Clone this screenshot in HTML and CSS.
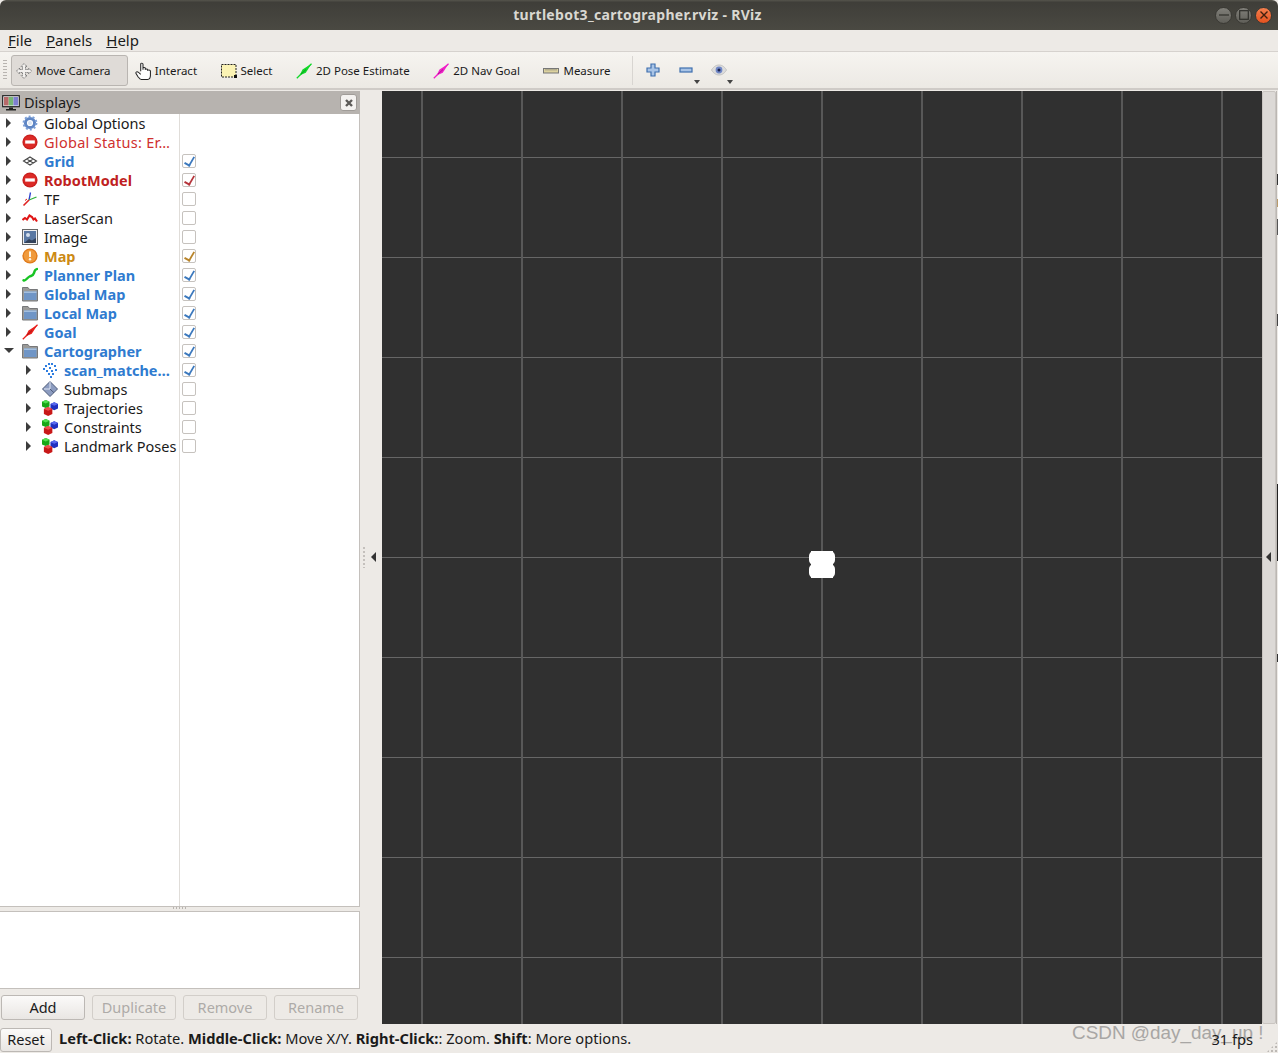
FILE: index.html
```html
<!DOCTYPE html>
<html lang="en">
<head>
    <meta charset="UTF-8">
    <title>turtlebot3_cartographer.rviz - RViz</title>
    <link rel="stylesheet" href="styles.css">
</head>
<body>

    <!-- shared icons -->
    <svg class="icon-defs" width="0" height="0">
        <symbol id="i-error" viewBox="0 0 16 16">
            <circle cx="8" cy="8" r="7.6" fill="#c9201f"/>
            <circle cx="8" cy="8" r="6.2" fill="#dc2a26"/>
            <rect x="3.2" y="6.4" width="9.6" height="3.2" fill="#fff"/>
        </symbol>
        <symbol id="i-warn" viewBox="0 0 16 16">
            <circle cx="8" cy="8" r="7.6" fill="#e07b1c"/>
            <circle cx="8" cy="8" r="6.2" fill="#f09a3c"/>
            <rect x="7" y="3.4" width="2" height="5.6" fill="#fff3e0"/>
            <circle cx="8" cy="11.3" r="1.2" fill="#fff3e0"/>
        </symbol>
        <symbol id="i-gear" viewBox="0 0 16 16">
            <circle cx="8" cy="8" r="4.6" fill="none" stroke="#5f86c4" stroke-width="3"/>
            <circle cx="8" cy="8" r="6.4" fill="none" stroke="#7c9fd6" stroke-width="2" stroke-dasharray="2 2"/>
            <circle cx="8" cy="8" r="2" fill="#dbe6f5"/>
        </symbol>
        <symbol id="i-grid" viewBox="0 0 16 16">
            <path d="M8 4 14.5 8 8 12 1.5 8Z M4.7 6 11.2 10 M11.3 6 4.8 10" fill="none" stroke="#444" stroke-width="1.1"/>
        </symbol>
        <symbol id="i-tf" viewBox="0 0 16 16">
            <path d="M7 9 8.5 1.5" stroke="#2b3fd0" stroke-width="1.3" fill="none"/>
            <path d="M7 9 14.5 6" stroke="#2fb13a" stroke-width="1.3" fill="none"/>
            <path d="M7 9 1.5 14.5" stroke="#e02020" stroke-width="1.6" fill="none"/>
            <path d="M3 9.5 5 8" stroke="#e02020" stroke-width="1" fill="none"/>
        </symbol>
        <symbol id="i-laser" viewBox="0 0 16 16">
            <path d="M.5 10 3 8 5 9.5 7.5 5.5 10 7 11.5 9.5 13 8.5 15 11.5" fill="none" stroke="#e01515" stroke-width="2.1"/>
        </symbol>
        <symbol id="i-image" viewBox="0 0 16 16">
            <rect x=".5" y=".5" width="15" height="15" fill="#eee" stroke="#666"/>
            <rect x="2" y="2" width="12" height="12" fill="#5a78a3"/>
            <circle cx="6" cy="6" r="2" fill="#d3deec"/>
            <path d="M2 14 7 10 10 11.5 14 9V14Z" fill="#34425a"/>
        </symbol>
        <symbol id="i-path" viewBox="0 0 16 16">
            <path d="M1.5 13.2C3.500 14.800 5 10.500 7.500 9.500S11 9 12 6 13 3 15 2" fill="none" stroke="#18c424" stroke-width="2.400" stroke-linecap="round"/>
        </symbol>
        <symbol id="i-folder" viewBox="0 0 16 16">
            <path d="M.5 15V1.500H6L7.500 3.500H15.500V15Z" fill="#9a9a98" stroke="#77787a"/>
            <rect x="2" y="5.500" width="12.500" height="8.500" fill="#6f95c6"/>
            <rect x="2" y="5.500" width="12.500" height="1.500" fill="#a4bfdf"/>
        </symbol>
        <symbol id="i-arrow" viewBox="0 0 16 16">
            <path d="M.8 15.200 15.500 .8" stroke="currentColor" stroke-width="1.300" fill="none"/>
            <path d="M3.500 12.500 6.500 6.500 15.500 .8 9.800 9.800Z" fill="currentColor"/>
            <path d="M5 11 10 6.500" stroke="#0005" stroke-width=".8" fill="none"/>
        </symbol>
        <symbol id="i-scan" viewBox="0 0 16 16">
            <g fill="#2f7ee0">
                <rect x="6" y="1" width="2" height="2"/><rect x="9" y="1" width="2" height="2"/><rect x="3" y="3" width="2" height="2"/>
                <rect x="12" y="3" width="2" height="2"/><rect x="1" y="6" width="2" height="2"/><rect x="7" y="5" width="2" height="2"/>
                <rect x="13" y="7" width="2" height="2"/><rect x="4" y="8" width="2" height="2"/><rect x="9" y="8" width="2" height="2"/>
                <rect x="6" y="11" width="2" height="2"/><rect x="10" y="11" width="2" height="2"/><rect x="8" y="14" width="2" height="2"/>
            </g>
        </symbol>
        <symbol id="i-submap" viewBox="0 0 16 16">
            <path d="M8 .5 15.500 8 8 15.500 .5 8Z" fill="#8c9cc0" stroke="#4d5a78"/>
            <path d="M8 .5V8L2 8" stroke="#dfe5f2" fill="none"/>
            <path d="M8 8 12 11.800" stroke="#4d5a78" fill="none"/>
        </symbol>
        <symbol id="i-cubes" viewBox="0 0 17 17">
            <path d="M4 0 8 1.800V6.800L4 8.600 0 6.800V1.800Z" fill="#18a818"/>
            <path d="M4 0 8 1.800 4 3.600 0 1.800Z" fill="#52e052"/>
            <path d="M13 2.500 17 4.300V9L13 10.800 9 9V4.300Z" fill="#2030c0"/>
            <path d="M13 2.500 17 4.300 13 6.100 9 4.300Z" fill="#5868ee"/>
            <path d="M6.500 7.500 11 9.500V15L6.500 17 2 15V9.500Z" fill="#c81818"/>
            <path d="M6.500 7.500 11 9.500 6.500 11.500 2 9.500Z" fill="#f05050"/>
        </symbol>
    </svg>

    <header class="titlebar">
        <div class="title">turtlebot3_cartographer.rviz - RViz</div>
        <div class="win-buttons">
            <span class="win-btn"><svg width="10" height="10" viewBox="0 0 10 10"><path d="M0 5H10" stroke="#2f2f2b" stroke-width="1.200"/></svg></span>
            <span class="win-btn"><svg width="10" height="10" viewBox="0 0 10 10"><rect x=".7" y=".7" width="8.600" height="8.600" fill="none" stroke="#2f2f2b" stroke-width="1.200"/></svg></span>
            <span class="win-btn close"><svg width="10" height="10" viewBox="0 0 10 10"><path d="M1.500 1.500 8.500 8.500M8.500 1.500 1.500 8.500" stroke="#40200f" stroke-width="1.400"/></svg></span>
        </div>
    </header>

    <nav class="menubar">
        <a><u>F</u>ile</a>
        <a><u>P</u>anels</a>
        <a><u>H</u>elp</a>
    </nav>

    <div class="toolbar">
        <div class="grip"></div>
        <div class="tool active">
            <svg width="16" height="16" viewBox="0 0 16 16"><path d="M8 .5 11 3.500H9.500V6.500H12.500V5L15.500 8 12.500 11V9.500H9.500V12.500H11L8 15.500 5 12.500H6.500V9.500H3.500V11L.5 8 3.500 5V6.500H6.500V3.500H5Z" fill="#f2f0ee" stroke="#666" stroke-width=".8" stroke-dasharray="1.500 .6"/></svg>
            Move Camera
        </div>
        <div class="tool">
            <svg width="16" height="18" viewBox="0 0 14 17.500" preserveAspectRatio="none"><path d="M5 9V2.200C5 .7 7 .7 7 2.200V7.500V6C7 5 9 5 9 6V7.500C9 6.500 11 6.500 11 7.500V8.500C11 7.500 13.500 7.500 13.500 8.800V13C13.500 15.500 12.500 17 11 17H5.500C4 17 3.500 15.500 2.500 14L.8 11C.5 9.800 1.800 9 3 10L5 12" fill="#fff" stroke="#222" stroke-width=".9"/></svg>
            Interact
        </div>
        <div class="tool">
            <svg width="16" height="16" viewBox="0 0 16 16"><rect x=".5" y="1.500" width="14.500" height="12.500" fill="#fbf3b4" stroke="#222" stroke-dasharray="2 1"/><rect x="13" y="12" width="3" height="3" fill="#111"/></svg>
            Select
        </div>
        <div class="tool">
            <svg class="green" width="16" height="16"><use href="#i-arrow"/></svg>
            2D Pose Estimate
        </div>
        <div class="tool">
            <svg class="pink" width="16" height="16"><use href="#i-arrow"/></svg>
            2D Nav Goal
        </div>
        <div class="tool">
            <svg width="16" height="16" viewBox="0 0 16 16"><rect x=".5" y="5.500" width="15" height="4.500" fill="#dcd29f" stroke="#777"/><path d="M3 5.500V7.500M5 5.500V7.500M7 5.500V7.500M9 5.500V7.500M11 5.500V7.500M13 5.500V7.500" stroke="#777" stroke-width=".8"/></svg>
            Measure
        </div>
        <div class="tool-sep"></div>
        <div class="mini-tool">
            <svg width="14" height="14" viewBox="0 0 14 14"><path d="M5 1H9V5H13V9H9V13H5V9H1V5H5Z" fill="#a9c4e6" stroke="#3e6fae" stroke-width="1.200"/></svg>
        </div>
        <div class="mini-tool has-menu">
            <svg width="14" height="14" viewBox="0 0 14 14"><rect x="1" y="5" width="12" height="4" fill="#a9c4e6" stroke="#3e6fae" stroke-width="1.200"/></svg>
        </div>
        <div class="mini-tool has-menu">
            <svg width="16" height="12" viewBox="0 0 16 12"><path d="M.5 6C3 2 5.500 1 8 1S13 2 15.500 6C13 10 10.500 11 8 11S3 10 .5 6Z" fill="#dcdcdc" stroke="#bbb" stroke-width=".8"/><circle cx="8" cy="6" r="3.400" fill="#6f86c6"/><circle cx="8" cy="6" r="1.500" fill="#1c2550"/></svg>
        </div>
    </div>

    <div class="workspace">
        <aside class="sidebar">
            <div class="panel-title">
                <svg width="18" height="16" viewBox="0 0 18 16"><rect x=".7" y=".7" width="16.600" height="11" fill="#fff" stroke="#222" stroke-width="1.200"/><rect x="2" y="2" width="4.700" height="8.500" fill="#b86a6a"/><rect x="6.700" y="2" width="4.700" height="8.500" fill="#76b676"/><rect x="11.400" y="2" width="4.700" height="8.500" fill="#7f7fd0"/><path d="M7 12.500H11V14H14V15.500H4V14H7Z" fill="#222"/></svg>
                <span class="panel-name">Displays</span>
                <span class="panel-close">
                    <svg width="10" height="10" viewBox="0 0 10 10"><path d="M2 2 8 8M8 2 2 8" stroke="#5c5a58" stroke-width="2.400"/></svg>
                </span>
            </div>

            <div class="tree">
                <div class="row">
                    <span class="name"><i class="arrow"></i><svg class="ico small"><use href="#i-gear"/></svg><span class="label">Global Options</span></span>
                </div>
                <div class="row">
                    <span class="name"><i class="arrow"></i><svg class="ico"><use href="#i-error"/></svg><span class="label err-plain">Global Status: Er…</span></span>
                </div>
                <div class="row">
                    <span class="name"><i class="arrow"></i><svg class="ico"><use href="#i-grid"/></svg><span class="label on">Grid</span></span>
                    <span class="check blue"></span>
                </div>
                <div class="row">
                    <span class="name"><i class="arrow"></i><svg class="ico"><use href="#i-error"/></svg><span class="label err">RobotModel</span></span>
                    <span class="check red"></span>
                </div>
                <div class="row">
                    <span class="name"><i class="arrow"></i><svg class="ico"><use href="#i-tf"/></svg><span class="label">TF</span></span>
                    <span class="check"></span>
                </div>
                <div class="row">
                    <span class="name"><i class="arrow"></i><svg class="ico"><use href="#i-laser"/></svg><span class="label">LaserScan</span></span>
                    <span class="check"></span>
                </div>
                <div class="row">
                    <span class="name"><i class="arrow"></i><svg class="ico"><use href="#i-image"/></svg><span class="label">Image</span></span>
                    <span class="check"></span>
                </div>
                <div class="row">
                    <span class="name"><i class="arrow"></i><svg class="ico"><use href="#i-warn"/></svg><span class="label warn">Map</span></span>
                    <span class="check orange"></span>
                </div>
                <div class="row">
                    <span class="name"><i class="arrow"></i><svg class="ico"><use href="#i-path"/></svg><span class="label on">Planner Plan</span></span>
                    <span class="check blue"></span>
                </div>
                <div class="row">
                    <span class="name"><i class="arrow"></i><svg class="ico"><use href="#i-folder"/></svg><span class="label on">Global Map</span></span>
                    <span class="check blue"></span>
                </div>
                <div class="row">
                    <span class="name"><i class="arrow"></i><svg class="ico"><use href="#i-folder"/></svg><span class="label on">Local Map</span></span>
                    <span class="check blue"></span>
                </div>
                <div class="row">
                    <span class="name"><i class="arrow"></i><svg class="ico goal"><use href="#i-arrow"/></svg><span class="label on">Goal</span></span>
                    <span class="check blue"></span>
                </div>
                <div class="row">
                    <span class="name"><i class="arrow open"></i><svg class="ico"><use href="#i-folder"/></svg><span class="label on">Cartographer</span></span>
                    <span class="check blue"></span>
                </div>
                <div class="row child">
                    <span class="name"><i class="arrow"></i><svg class="ico"><use href="#i-scan"/></svg><span class="label on">scan_matche…</span></span>
                    <span class="check blue"></span>
                </div>
                <div class="row child">
                    <span class="name"><i class="arrow"></i><svg class="ico"><use href="#i-submap"/></svg><span class="label">Submaps</span></span>
                    <span class="check"></span>
                </div>
                <div class="row child">
                    <span class="name"><i class="arrow"></i><svg class="ico"><use href="#i-cubes"/></svg><span class="label">Trajectories</span></span>
                    <span class="check"></span>
                </div>
                <div class="row child">
                    <span class="name"><i class="arrow"></i><svg class="ico"><use href="#i-cubes"/></svg><span class="label">Constraints</span></span>
                    <span class="check"></span>
                </div>
                <div class="row child">
                    <span class="name"><i class="arrow"></i><svg class="ico"><use href="#i-cubes"/></svg><span class="label">Landmark Poses</span></span>
                    <span class="check"></span>
                </div>
                <div class="tree-rest"></div>
            </div>

            <div class="splitter"></div>
            <div class="description"></div>

            <div class="panel-buttons">
                <button class="btn">Add</button>
                <button class="btn" disabled>Duplicate</button>
                <button class="btn" disabled>Remove</button>
                <button class="btn" disabled>Rename</button>
            </div>
        </aside>

        <div class="gutter">
            <div class="gutter-dots"></div>
            <i class="collapse"></i>
        </div>

        <main class="viewport">
            <div class="robot"></div>
        </main>

        <div class="side-handle"><i class="collapse"></i></div>
        <div class="edge"></div>
    </div>

    <footer class="statusbar">
        <button class="btn reset">Reset</button>
        <p class="hint"><b>Left-Click:</b> Rotate. <b>Middle-Click:</b> Move X/Y. <b>Right-Click:</b>: Zoom. <b>Shift</b>: More options.</p>
        <span class="watermark">CSDN @day_day_up !</span>
        <span class="fps">31 fps</span>
        <div class="size-grip"></div>
    </footer>

</body>
</html>
```

FILE: styles.css
```css
* {
    margin: 0;
    padding: 0;
    box-sizing: border-box;
}

html, body {
    height: 100%;
    overflow: hidden;
}

body {
    width: 1278px;
    height: 1053px;
    display: flex;
    flex-direction: column;
    font-family: "Noto Sans", sans-serif;
    font-size: 14px;
    color: #1a1a1a;
    background-color: #edeae6;
}

.icon-defs {
    position: absolute;
}

/* title bar */
.titlebar {
    height: 30px;
    flex: none;
    display: flex;
    align-items: center;
    justify-content: flex-end;
    position: relative;
    background: linear-gradient(#55544c, #3f3e39 8%, #4a4942);
    border-radius: 6px 6px 0 0;
}

.title {
    position: absolute;
    left: 0;
    right: 3px;
    top: 5px;
    text-align: center;
    font-size: 14px;
    font-weight: bold;
    letter-spacing: 0.3px;
    color: #d9d8d2;
}

.win-buttons {
    display: flex;
    gap: 3px;
    margin-right: 6px;
    position: relative;
}

.win-btn {
    width: 17px;
    height: 17px;
    border-radius: 50%;
    display: flex;
    align-items: center;
    justify-content: center;
    background: linear-gradient(#807f79, #5f5e58);
    border: 1px solid #3a3934;
}

.win-btn.close {
    background: linear-gradient(#f47f4e, #e4521f);
}

/* menu */
.menubar {
    height: 22px;
    flex: none;
    display: flex;
    align-items: center;
    gap: 14px;
    padding: 0 0 2px 8px;
    background-color: #edeae6;
    border-bottom: 1px solid #d6d2ce;
    font-size: 15px;
}

/* toolbar */
.toolbar {
    height: 38px;
    flex: none;
    display: flex;
    align-items: center;
    padding-left: 3px;
    font-size: 11.500px;
    background: linear-gradient(#f6f4f0, #ece9e4);
    border-bottom: 2px solid #cfcbc7;
}

.grip {
    width: 4px;
    height: 22px;
    margin-right: 4px;
    background-image: radial-gradient(#b8b4b0 40%, transparent 45%);
    background-size: 2px 3px;
}

.tool {
    display: flex;
    align-items: center;
    gap: 4px;
    height: 31px;
    padding: 1px 11.750px 0;
}

.tool.active {
    width: 117px;
    padding: 1px 4px 0;
    margin-right: -5px;
    background-color: #dfdbd7;
    border: 1px solid #b9b5b1;
    border-radius: 3px;
}

.tool .green {
    color: #12d82a;
}

.tool .pink {
    color: #f01fc8;
}

.tool-sep {
    width: 1px;
    height: 29px;
    margin: 0 3px 0 10px;
    background-color: #d8d5d1;
}

.mini-tool {
    width: 33px;
    height: 31px;
    display: flex;
    align-items: center;
    justify-content: center;
    position: relative;
}

.mini-tool.has-menu::after {
    content: "";
    position: absolute;
    right: 2px;
    bottom: 2px;
    border: 3px solid transparent;
    border-top: 4px solid #444;
    border-bottom: 0;
}

/* main area */
.workspace {
    flex: 1;
    display: flex;
    min-height: 0;
    padding-top: 1px;
}

.sidebar {
    width: 360px;
    flex: none;
    display: flex;
    flex-direction: column;
}

.panel-title {
    height: 23px;
    flex: none;
    display: flex;
    align-items: center;
    gap: 4px;
    padding: 0 3px 0 2px;
    background-color: #b7b3af;
    font-size: 14.500px;
}

.panel-name {
    flex: 1;
    padding-bottom: 2px;
}

.panel-close {
    width: 17px;
    height: 17px;
    display: flex;
    align-items: center;
    justify-content: center;
    background-color: #f4f2f0;
    border: 1px solid #a09c98;
    border-radius: 3px;
}

.tree {
    flex: 1;
    display: flex;
    flex-direction: column;
    background-color: #fff;
    border-right: 1px solid #c4c0bc;
    border-bottom: 1px solid #c4c0bc;
}

.row {
    height: 19px;
    flex: none;
    display: flex;
    align-items: center;
}

.name {
    width: 180px;
    height: 100%;
    flex: none;
    display: flex;
    align-items: center;
    padding: 0 0 2px 6px;
    border-right: 1px solid #e0ddd9;
    white-space: nowrap;
    font-size: 14.500px;
}

.row.child .name {
    padding-left: 26px;
}

.tree-rest {
    flex: 1;
    width: 180px;
    border-right: 1px solid #e0ddd9;
}

.arrow {
    width: 0;
    height: 0;
    flex: none;
    margin-right: 11px;
    border-left: 5px solid #3c3c3c;
    border-top: 5px solid transparent;
    border-bottom: 5px solid transparent;
}

.arrow.open {
    margin: 0 8px 0 -2px;
    border-top: 5px solid #3c3c3c;
    border-left: 5px solid transparent;
    border-right: 5px solid transparent;
    border-bottom: 0;
}

.ico {
    width: 16px;
    height: 16px;
    flex: none;
    margin-right: 6px;
}

.ico.goal {
    color: #e8201c;
}

.label.on {
    font-weight: bold;
    color: #2f7bd0;
}

.label.err {
    font-weight: bold;
    color: #c01f22;
}

.label.err-plain {
    color: #d0312f;
    letter-spacing: 0.3px;
}

.label.warn {
    font-weight: bold;
    color: #cc8a14;
}

.check {
    width: 14px;
    height: 14px;
    margin-left: 2px;
    margin-bottom: 1px;
    display: flex;
    align-items: center;
    justify-content: center;
    border: 1px solid #c6c2be;
    border-radius: 2px;
}

/* tick mark, only on the colored boxes */
.check.blue::after,
.check.red::after,
.check.orange::after {
    content: "";
    width: 5px;
    height: 9px;
    margin-top: -2px;
    border-right: 2px solid currentColor;
    border-bottom: 2px solid currentColor;
    transform: rotate(30deg) scaleX(0.9);
}

.check.blue {
    color: #3b78bd;
}

.check.red {
    color: #b5343a;
}

.check.orange {
    color: #b8842a;
}

.splitter {
    height: 4px;
    flex: none;
    background-image: radial-gradient(#b8b4b0 45%, transparent 50%);
    background-size: 3px 2px;
    background-repeat: repeat-x;
    background-clip: content-box;
    background-origin: content-box;
    padding: 0 172px;
}

.description {
    height: 78px;
    flex: none;
    background-color: #fff;
    border: 1px solid #c4c0bc;
    border-left: 0;
}

.panel-buttons {
    height: 35px;
    flex: none;
    display: flex;
    align-items: center;
    gap: 7px;
    padding: 1px 0 0 1px;
}

.btn {
    width: 84px;
    height: 25px;
    font-family: inherit;
    font-size: 14.500px;
    color: #1a1a1a;
    background: linear-gradient(#fbfaf9, #e9e6e3);
    border: 1px solid #bcb8b4;
    border-radius: 3px;
}

.btn:disabled {
    color: #aeaba8;
    background: #edeae6;
    border-color: #d2cec9;
}

.gutter {
    width: 22px;
    flex: none;
    display: flex;
    align-items: center;
    gap: 6px;
    padding: 0 0 2px 3px;
}

.gutter-dots {
    width: 2px;
    height: 22px;
    background-image: radial-gradient(#c4c0bc 50%, transparent 55%);
    background-size: 2px 4px;
}

.collapse {
    width: 0;
    height: 0;
    border-right: 5px solid #333;
    border-top: 5px solid transparent;
    border-bottom: 5px solid transparent;
}

.viewport {
    flex: 1;
    position: relative;
    background-color: #303030;
    background-image:
        linear-gradient(90deg, #585858 2px, transparent 2px),
        linear-gradient(#666 1px, transparent 1px);
    background-size: 100px 100px;
    background-position: 39px 0, 0 66px;
}

/* white core plus two rounded blocks leave a shallow notch at the sides */
.robot {
    position: absolute;
    left: 427px;
    top: 460px;
    width: 26px;
    height: 27px;
    background: linear-gradient(#fff, #fff) center / 22px 100% no-repeat;
}

.robot::before,
.robot::after {
    content: "";
    position: absolute;
    left: 0;
    width: 26px;
    height: 14px;
    background-color: #fff;
    border-radius: 5px;
}

.robot::before {
    top: 0;
}

.robot::after {
    bottom: 0;
}

.side-handle {
    width: 14px;
    flex: none;
    display: flex;
    align-items: center;
    justify-content: center;
    padding: 0 2px 2px 0;
    background-color: #dcd9d6;
    border: 1px solid #c9c5c1;
    border-radius: 2px;
}

.edge {
    width: 2px;
    flex: none;
    border-left: 1px solid #bbb7b3;
    /* bits of the window behind, seen along the right border */
    background-image: linear-gradient(#edeae6 83px, #333 83px, #333 94px, #edeae6 94px,
        #edeae6 108px, #b89a6a 108px, #b89a6a 116px, #edeae6 116px,
        #edeae6 128px, #555 128px, #555 144px, #edeae6 144px,
        #edeae6 223px, #444 223px, #444 235px, #edeae6 235px,
        #edeae6 393px, #222 393px, #222 470px, #edeae6 470px,
        #edeae6 563px, #333 563px, #333 571px, #edeae6 571px);
}

/* status bar */
.statusbar {
    height: 29px;
    flex: none;
    display: flex;
    align-items: center;
    gap: 7px;
    position: relative;
    font-size: 14.650px;
}

.btn.reset {
    width: 52px;
    height: 24px;
    margin-top: 2px;
    padding-bottom: 2px;
}

.hint {
    flex: 1;
    padding-bottom: 2px;
    white-space: nowrap;
}

.fps {
    position: relative;
    margin-right: 25px;
}

.watermark {
    position: absolute;
    left: 1072px;
    top: -2px;
    font-family: "Liberation Sans", sans-serif;
    font-size: 18.900px;
    color: #a8a6a4;
    white-space: nowrap;
}

.size-grip {
    position: absolute;
    right: 0;
    bottom: 0;
    width: 12px;
    height: 12px;
    background-image: radial-gradient(#bdb9b5 40%, transparent 45%);
    background-size: 4px 4px;
    clip-path: polygon(100% 0, 100% 100%, 0 100%);
}
```
